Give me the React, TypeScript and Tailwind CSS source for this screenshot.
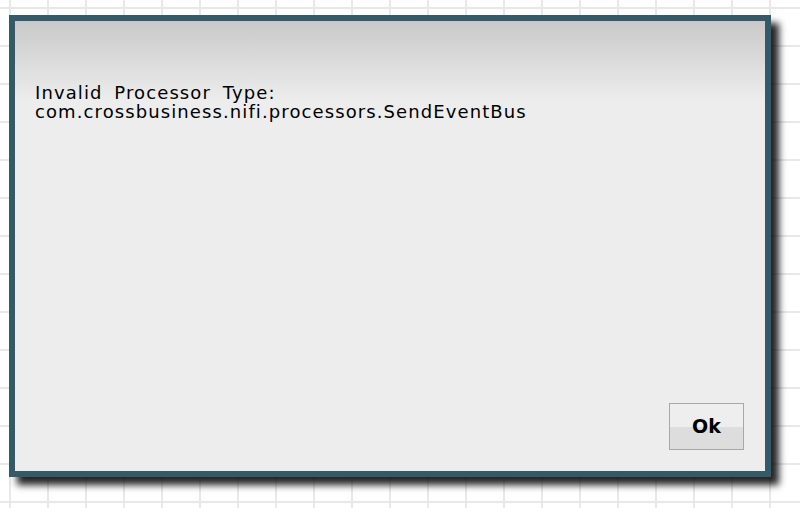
export default function App() {
  return (
    <div className="w-[800px] h-[508px] overflow-hidden bg-white bg-[linear-gradient(to_right,#e8e8e8_2px,transparent_2px),linear-gradient(to_bottom,#e8e8e8_2px,transparent_2px)] bg-[size:38px_38px] bg-[position:9px_7px] pl-[9px] pt-[15px]">
      {/* dialog */}
      <div className="w-[762px] h-[462px] border-[6px] border-[#335a66] bg-[#ededed] shadow-[8px_8px_7px_rgba(0,0,0,0.85)] flex flex-col font-['DejaVu_Sans',sans-serif]">
        <div className="h-[80px] shrink-0 bg-[linear-gradient(to_bottom,#c9c9c9,#ededed)]" />
        <div className="flex-1 flex flex-col px-[20px] -mt-[18px]">
          <div className="text-[18px] leading-[19px] tracking-[1.1px] [word-spacing:5px] text-black">
            <div>Invalid Processor Type:</div>
            <div>com.crossbusiness.nifi.processors.SendEventBus</div>
          </div>
          <div className="flex-1" />
          <div className="flex justify-end pb-[21px]">
            <button className="w-[75px] h-[47px] border border-[#a8a8a8] bg-[linear-gradient(to_bottom,#eeeeee_50%,#dddddd_50%)] text-[19px] font-bold text-black mr-[1px]">
              Ok
            </button>
          </div>
        </div>
      </div>
    </div>
  );
}
